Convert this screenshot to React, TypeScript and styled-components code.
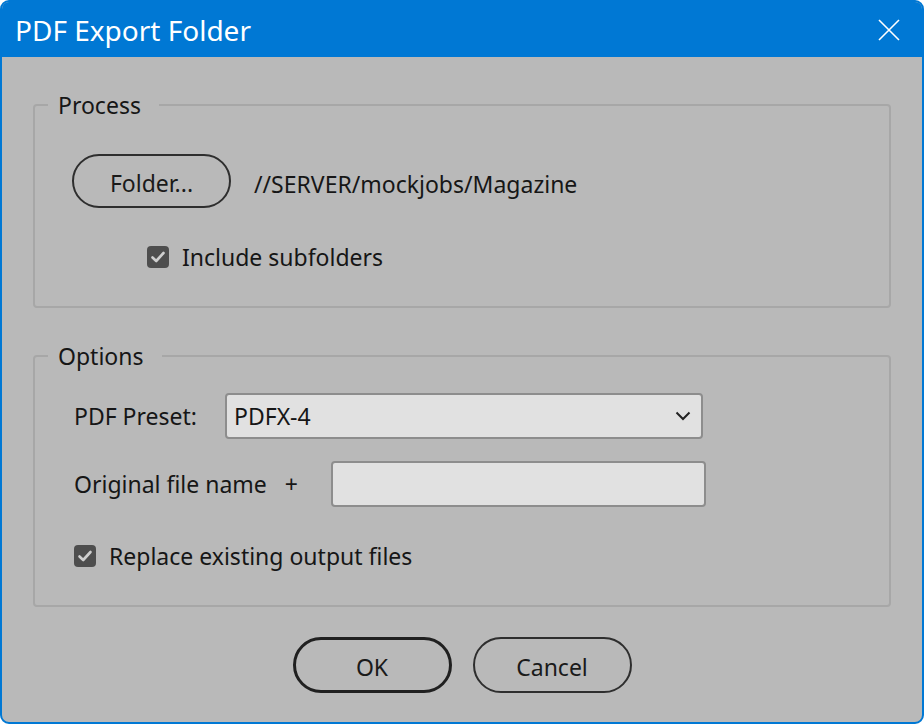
import styled, { createGlobalStyle } from "styled-components";

const GlobalStyle = createGlobalStyle`
  html, body {
    margin: 0;
    padding: 0;
    background: #ffffff;
  }
  * {
    box-sizing: border-box;
  }
`;

export default function App() {
  return (
    <>
      <GlobalStyle />
      <Window>
        <TitleBar>
          <Title>PDF Export Folder</Title>
          <CloseButton aria-label="Close">
            <svg width="22" height="22" viewBox="0 0 22 22">
              <path d="M1 1 L21 21 M21 1 L1 21" stroke="#ffffff" strokeWidth="1.6" fill="none" />
            </svg>
          </CloseButton>
        </TitleBar>

        <Body>
          <Group>
            <Legend>Process</Legend>
            <GroupBody $top={34} $left={37} $bottom={34}>
              <Row $height={54}>
                <PillButton $width={159}>Folder...</PillButton>
                <PathText>//SERVER/mockjobs/Magazine</PathText>
              </Row>
              <CheckRow $indent={75} $top={34}>
                <CheckBox />
                <CheckLabel>Include subfolders</CheckLabel>
              </CheckRow>
            </GroupBody>
          </Group>

          <Group $top={33}>
            <Legend>Options</Legend>
            <GroupBody $top={22} $left={39} $bottom={34}>
              <Row $height={46}>
                <FieldLabel $width={151}>PDF Preset:</FieldLabel>
                <Select $width={478}>
                  <span>PDFX-4</span>
                  <svg width="16" height="10" viewBox="0 0 16 10">
                    <path d="M1.5 1.5 L8 8 L14.5 1.5" stroke="#222" strokeWidth="2" fill="none" />
                  </svg>
                </Select>
              </Row>
              <Row $height={46} $top={22}>
                <FieldLabel $width={257}>
                  Original file name<Plus>+</Plus>
                </FieldLabel>
                <TextInput $width={375} />
              </Row>
              <CheckRow $indent={0} $top={34}>
                <CheckBox />
                <CheckLabel>Replace existing output files</CheckLabel>
              </CheckRow>
            </GroupBody>
          </Group>

          <Footer>
            <PillButton $width={159} $height={56} $primary>
              OK
            </PillButton>
            <PillButton $width={159} $height={56}>
              Cancel
            </PillButton>
          </Footer>
        </Body>
      </Window>
    </>
  );
}

function CheckBox() {
  return (
    <Box>
      <svg width="22" height="22" viewBox="0 0 22 22">
        <path d="M5.5 11.5 L9.2 15 L16.5 7" stroke="#cfcfcf" strokeWidth="2.6" fill="none" strokeLinecap="round" strokeLinejoin="round" />
      </svg>
    </Box>
  );
}

const Window = styled.div`
  width: 924px;
  height: 724px;
  display: flex;
  flex-direction: column;
  background: #b9b9b9;
  border: 2px solid #0078d4;
  border-radius: 9px;
  overflow: hidden;
  font-family: "Noto Sans", "Open Sans", sans-serif;
  color: #161616;
`;

const TitleBar = styled.div`
  height: 55px;
  flex-shrink: 0;
  display: flex;
  align-items: center;
  justify-content: space-between;
  padding: 0 22px 0 13px;
  background: #0078d4;
`;

const Title = styled.div`
  font-size: 28px;
  color: #ffffff;
  line-height: 1;
`;

const CloseButton = styled.div`
  display: flex;
  align-items: center;
  justify-content: center;
  width: 22px;
  height: 22px;
`;

const Body = styled.div`
  flex: 1;
  display: flex;
  flex-direction: column;
  padding: 33px 31px 0;
`;

const Group = styled.fieldset<{ $top?: number }>`
  margin: ${(p) => p.$top ?? 0}px 0 0;
  padding: 0;
  min-width: 0;
  border: 2px solid #a7a7a7;
  border-radius: 4px;
`;

const Legend = styled.legend`
  margin-left: 13px;
  padding: 0 18px 0 10px;
  font-size: 23px;
  line-height: 30px;
`;

const GroupBody = styled.div<{ $top: number; $left: number; $bottom: number }>`
  display: flex;
  flex-direction: column;
  padding: ${(p) => p.$top}px 0 ${(p) => p.$bottom}px ${(p) => p.$left}px;
`;

const Row = styled.div<{ $height: number; $top?: number }>`
  display: flex;
  align-items: center;
  height: ${(p) => p.$height}px;
  margin-top: ${(p) => p.$top ?? 0}px;
`;

const PillButton = styled.div<{ $width: number; $height?: number; $primary?: boolean }>`
  width: ${(p) => p.$width}px;
  height: ${(p) => p.$height ?? 54}px;
  flex-shrink: 0;
  display: flex;
  align-items: center;
  justify-content: center;
  border: ${(p) => (p.$primary ? "3px solid #202020" : "2px solid #2e2e2e")};
  border-radius: 999px;
  font-size: 23px;
  padding-top: 3px;
  color: #1a1a1a;
`;

const PathText = styled.div`
  margin-left: 23px;
  font-size: 23px;
  padding-top: 6px;
`;

const CheckRow = styled.div<{ $indent: number; $top: number }>`
  display: flex;
  align-items: center;
  height: 30px;
  margin-top: ${(p) => p.$top}px;
  padding-left: ${(p) => p.$indent}px;
`;

const Box = styled.div`
  width: 22px;
  height: 22px;
  border-radius: 4px;
  background: #4e4e4e;
  display: flex;
  align-items: center;
  justify-content: center;
`;

const CheckLabel = styled.div`
  margin-left: 13px;
  font-size: 23px;
`;

const FieldLabel = styled.div<{ $width: number }>`
  width: ${(p) => p.$width}px;
  flex-shrink: 0;
  font-size: 23px;
  display: flex;
  align-items: center;
`;

const Plus = styled.span`
  margin-left: 18px;
`;

const Select = styled.div<{ $width: number }>`
  width: ${(p) => p.$width}px;
  height: 46px;
  flex-shrink: 0;
  display: flex;
  align-items: center;
  justify-content: space-between;
  padding: 0 10px 0 7px;
  background: #e1e1e1;
  border: 2px solid #8d8d8d;
  border-radius: 4px;
  font-size: 23px;
`;

const TextInput = styled.div<{ $width: number }>`
  width: ${(p) => p.$width}px;
  height: 46px;
  flex-shrink: 0;
  background: #e1e1e1;
  border: 2px solid #8d8d8d;
  border-radius: 4px;
`;

const Footer = styled.div`
  display: flex;
  justify-content: center;
  gap: 21px;
  margin-top: 30px;
`;
